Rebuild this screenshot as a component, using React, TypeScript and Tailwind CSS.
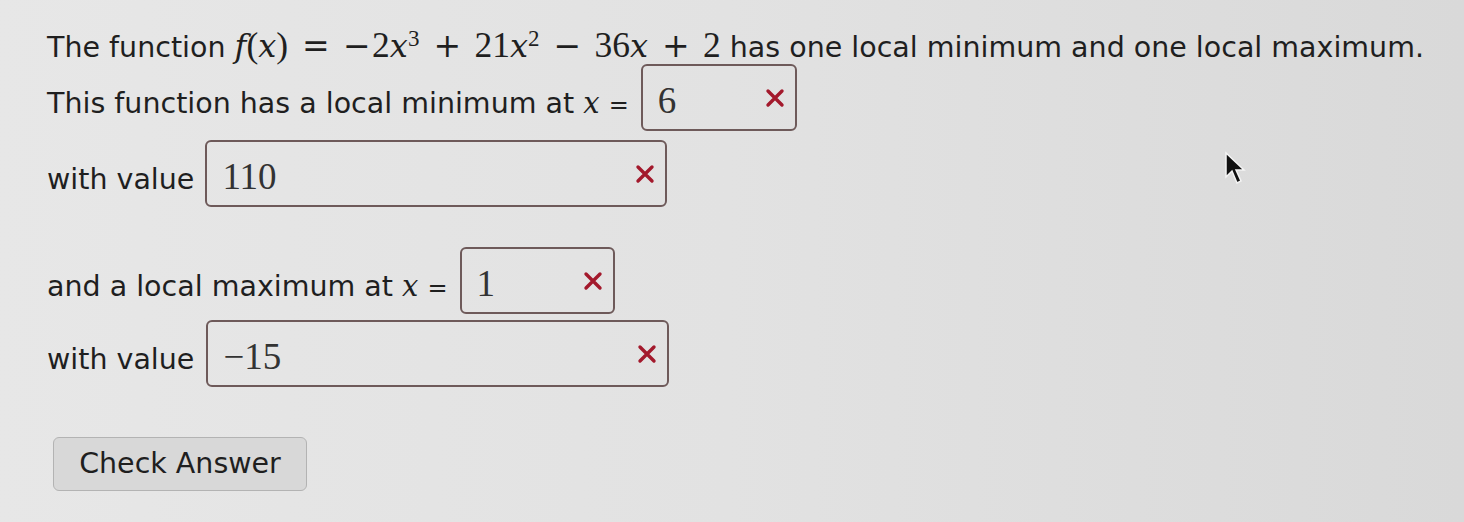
import type { ReactNode } from 'react';

const sans = "font-['DejaVu_Sans',_'Open_Sans',_sans-serif]";
const serif = "font-['Liberation_Serif',_'DejaVu_Serif',_serif]";

function V({ children }: { children: ReactNode }) {
  return <span className="italic font-['DejaVu_Serif',_serif] text-[32px]">{children}</span>;
}

// operator glyph in a fixed slot so spacing looks like TeX
function Op({ children, unary }: { children: ReactNode; unary?: boolean }) {
  return (
    <span
      className={`inline-block w-[27px] text-center font-['DejaVu_Serif',_serif] text-[33px] ${unary ? 'mr-[2px]' : 'mx-[14px]'}`}
    >
      {children}
    </span>
  );
}

function AnswerBox({ value, width }: { value: ReactNode; width: string }) {
  return (
    <div
      className={`flex h-[67px] items-center justify-between rounded-[6px] border-2 border-[#6e5a5a] pl-[15px] pr-[10px] pt-[6px] ${width}`}
    >
      <span className={`${serif} text-[37px] leading-[40px] text-[#333]`}>{value}</span>
      <svg width="20" height="20" viewBox="0 0 20 20" className="-mt-[6px] shrink-0">
        <path d="M3 3 L17 17 M17 3 L3 17" stroke="#a3192c" strokeWidth="3.4" strokeLinecap="round" />
      </svg>
    </div>
  );
}

function XEq() {
  return (
    <>
      <span className="font-['DejaVu_Serif',_serif] text-[29px] italic">x</span>{' '}
      <span className="text-[24px]">=</span>
    </>
  );
}

export default function App() {
  return (
    <div className="relative h-[522px] w-[1464px] overflow-hidden bg-linear-to-r from-[#e7e7e7] via-[#e2e2e2] to-[#d9d9d9] text-[#1f1f1f]">
      <div className={`${sans} flex flex-col pl-[47px] pt-[25px] text-[28.5px] leading-[40px]`}>
        <div className="flex h-[40px] items-baseline whitespace-nowrap">
          <span>The function&nbsp;</span>
          <span className={`${serif} text-[35.5px] leading-[40px]`}>
            <V>f</V>(<V>x</V>)<Op>=</Op>
            <Op unary>−</Op>2<V>x</V>
            <sup className="text-[23px]">3</sup>
            <Op>+</Op>21<V>x</V>
            <sup className="text-[23px]">2</sup>
            <Op>−</Op>36<V>x</V>
            <Op>+</Op>2
          </span>
          <span>&nbsp;has one local minimum and one local maximum.</span>
        </div>

        <div className="-mt-[1px] flex items-baseline">
          <span>
            This function has a local minimum at <XEq />
          </span>
          <div className="ml-[12px]">
            <AnswerBox value="6" width="w-[156px]" />
          </div>
        </div>

        <div className="mt-[9px] flex items-baseline">
          <span>with value</span>
          <div className="ml-[11px]">
            <AnswerBox value="110" width="w-[462px]" />
          </div>
        </div>

        <div className="mt-[40px] flex items-baseline">
          <span>
            and a local maximum at <XEq />
          </span>
          <div className="ml-[12px]">
            <AnswerBox value="1" width="w-[155px]" />
          </div>
        </div>

        <div className="mt-[6px] flex items-baseline">
          <span>with value</span>
          <div className="ml-[12px]">
            <AnswerBox value="−15" width="w-[463px]" />
          </div>
        </div>

        <div className="mt-[50px] pl-[6px]">
          <button className="h-[54px] w-[254px] rounded-[6px] border border-[#b3b3b3] bg-[#d8d8d8] text-[28.5px] text-[#1f1f1f]">
            Check Answer
          </button>
        </div>
      </div>

      <svg
        className="absolute left-[1224px] top-[151px]"
        width="24"
        height="38"
        viewBox="0 0 24 38"
      >
        <path d="M2 2 L2 26 L8 20 L13 32 L17 30 L12 19 L20 19 Z" fill="#111" stroke="#f4f4f4" strokeWidth="1.5" />
      </svg>
    </div>
  );
}
